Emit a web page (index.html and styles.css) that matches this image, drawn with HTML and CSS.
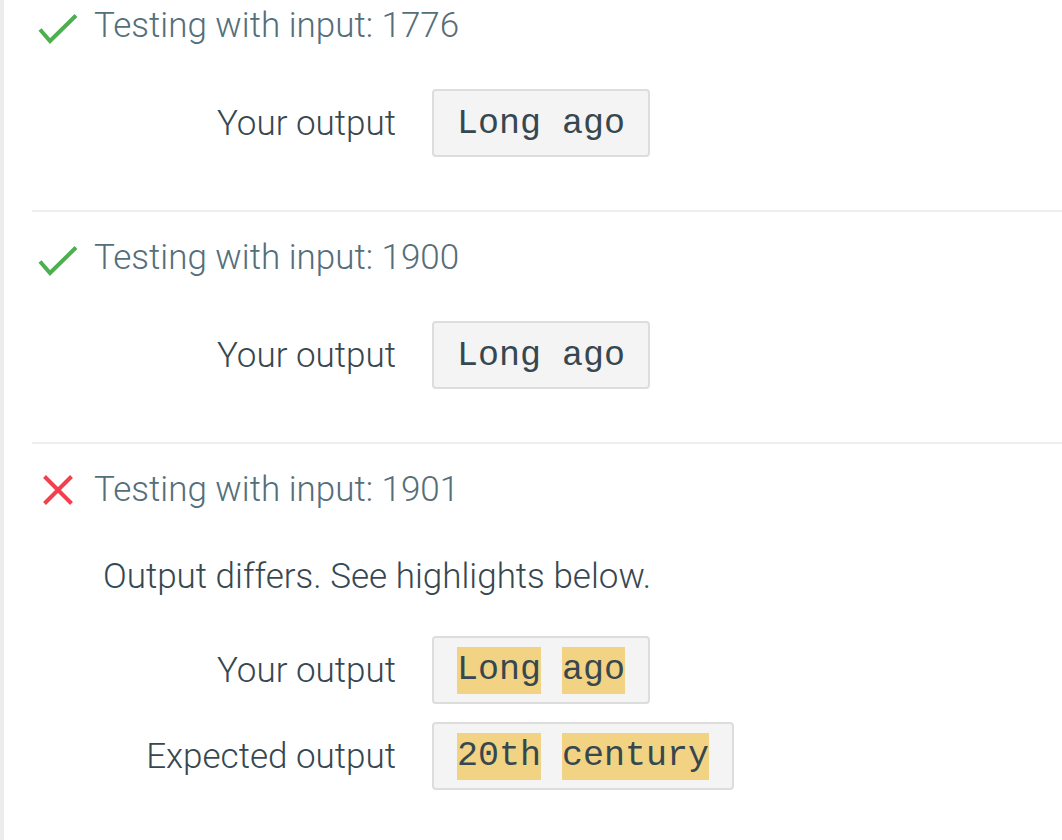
FILE: index.html
```html
<!DOCTYPE html>
<html lang="en">
<head>
<meta charset="utf-8">
<title>Test results</title>
<link rel="stylesheet" href="styles.css">
</head>
<body>
<div class="page">
  <section class="test">
    <div class="test-head">
      <svg class="icon" width="44" height="52" viewBox="0 0 44 52"><polyline points="4,29.5 14,41 40,15.5" fill="none" stroke="#4caf50" stroke-width="4"/></svg>
      <span class="title">Testing with input: 1776</span>
    </div>
    <div class="rows">
      <div class="row">
        <span class="label">Your output</span>
        <code class="box">Long ago</code>
      </div>
    </div>
  </section>
  <section class="test">
    <div class="test-head">
      <svg class="icon" width="44" height="52" viewBox="0 0 44 52"><polyline points="4,29.5 14,41 40,15.5" fill="none" stroke="#4caf50" stroke-width="4"/></svg>
      <span class="title">Testing with input: 1900</span>
    </div>
    <div class="rows">
      <div class="row">
        <span class="label">Your output</span>
        <code class="box">Long ago</code>
      </div>
    </div>
  </section>
  <section class="test">
    <div class="test-head">
      <svg class="icon" width="44" height="52" viewBox="0 0 44 52"><path d="M8.5 12.5 L35.5 39.5 M35.5 12.5 L8.5 39.5" fill="none" stroke="#f2404e" stroke-width="4"/></svg>
      <span class="title">Testing with input: 1901</span>
    </div>
    <p class="note">Output differs. See highlights below.</p>
    <div class="rows diff">
      <div class="row">
        <span class="label">Your output</span>
        <code class="box"><span class="hl">Long</span> <span class="hl">ago</span></code>
      </div>
      <div class="row">
        <span class="label">Expected output</span>
        <code class="box"><span class="hl">20th</span> <span class="hl">century</span></code>
      </div>
    </div>
  </section>
</div>
</body>
</html>
```
FILE: styles.css
```css
html, body {
  margin: 0;
  padding: 0;
  background: #ffffff;
}

body {
  font-family: Roboto, "Liberation Sans", sans-serif;
  font-weight: 300;
}

.page {
  min-height: 840px;
  border-left: 4px solid #ececec;
  box-sizing: border-box;
  overflow: hidden;
}

.test {
  margin-left: 28px;
  padding: 20px 0 53px;
  border-bottom: 2px solid #eeeeee;
}

.test:first-child {
  padding-top: 0;
}

.test-head {
  display: flex;
  align-items: center;
  height: 52px;
  padding-left: 4px;
}

.icon {
  display: block;
  flex: none;
  margin-right: 14px;
}

.title {
  font-size: 35px;
  color: #546e7a;
  line-height: 52px;
}

.note {
  margin: 35px 0 0 71px;
  font-size: 35px;
  line-height: 52px;
  color: #37474f;
}

.rows {
  display: flex;
  flex-direction: column;
  gap: 18px;
  margin-top: 37px;
}

.rows.diff {
  margin-top: 33px;
}

.row {
  display: flex;
  align-items: center;
}

.label {
  width: 364px;
  flex: none;
  text-align: right;
  font-size: 35px;
  color: #37474f;
  margin-right: 36px;
}

.box {
  display: block;
  height: 68px;
  box-sizing: border-box;
  padding: 0 23px;
  line-height: 66px;
  background: #f4f4f4;
  border: 2px solid #dddddd;
  border-radius: 4px;
  font-family: "Courier New", "Liberation Mono", monospace;
  font-size: 35px;
  color: #37474f;
  white-space: pre;
}

.hl {
  display: inline-block;
  height: 47px;
  line-height: 47px;
  vertical-align: middle;
  background: #f2d383;
}
</style>
```
